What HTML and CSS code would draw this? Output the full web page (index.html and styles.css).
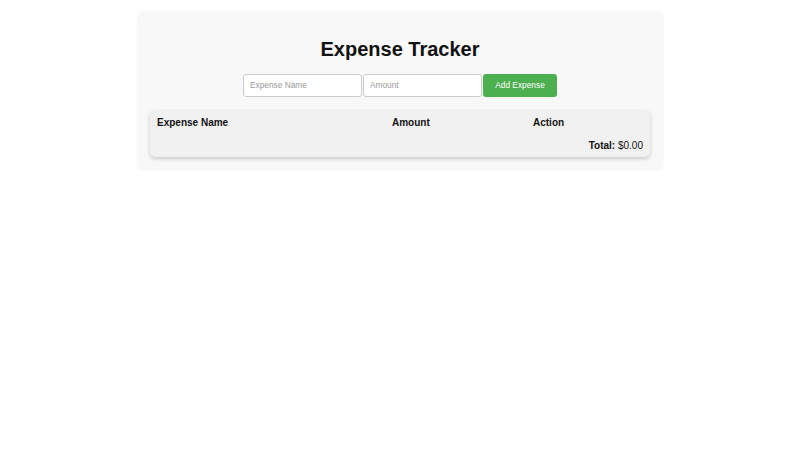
FILE: index.html
```html
<!DOCTYPE html>
<html lang="en">
<head>
    <meta charset="UTF-8">
    <meta name="viewport" content="width=device-width, initial-scale=1.0">
    <title>Expense Tracker</title>
    <link rel="stylesheet" href="styles.css">
</head>
<body>
<div class="container">
    <h1>Expense Tracker</h1>

    <div class="expense-form">
        <input type="text" id="expenseName" placeholder="Expense Name">
        <input type="number" id="expenseAmount" placeholder="Amount">
        <button class="add-button" onclick="addExpense()">Add Expense</button>
    </div>

    <table class="expense-table">
        <thead>
            <tr>
                <th class="col-name">Expense Name</th>
                <th class="col-amount">Amount</th>
                <th class="col-action">Action</th>
            </tr>
        </thead>
        <tbody id="expenseList"></tbody>
        <tfoot>
            <tr>
                <td colspan="3" class="total"><b>Total:</b> $<span id="total">0.00</span></td>
            </tr>
        </tfoot>
    </table>
</div>

<script>
    let expenses = [];

    function addExpense() {
        const name = document.getElementById('expenseName').value.trim();
        const amount = parseFloat(document.getElementById('expenseAmount').value);
        if (!name || isNaN(amount)) return;
        expenses.push({ name: name, amount: amount });
        document.getElementById('expenseName').value = '';
        document.getElementById('expenseAmount').value = '';
        render();
    }

    function removeExpense(i) {
        expenses.splice(i, 1);
        render();
    }

    function render() {
        const list = document.getElementById('expenseList');
        list.innerHTML = '';
        let total = 0;
        expenses.forEach((e, i) => {
            total += e.amount;
            list.innerHTML += `<tr><td>${e.name}</td><td>$${e.amount.toFixed(2)}</td>
                <td><button class="delete-button" onclick="removeExpense(${i})">Delete</button></td></tr>`;
        });
        document.getElementById('total').textContent = total.toFixed(2);
    }
</script>
</body>
</html>
```

FILE: styles.css
```css
body {
    font-family: "Liberation Sans", Arial, sans-serif;
    background-color: #ffffff;
    color: #111;
    margin: 0;
    padding: 0;
}
.container {
    width: 500px;
    margin: 12px auto;
    padding: 12.5px 12.5px 13.5px;
    background-color: #f8f8f8;
    border-radius: 6px;
    box-shadow: 0 0 3px rgba(0,0,0,0.06);
}
h1 {
    text-align: center;
    font-size: 20px;
    margin: 13px 0;
}
.expense-form {
    display: flex;
    justify-content: center;
    gap: 1px;
    margin-bottom: 13.5px;
}
.expense-form input {
    width: 119px;
    box-sizing: border-box;
    padding: 5.75px 6.25px;
    font-family: "Liberation Sans", Arial, sans-serif;
    font-size: 8.33px;
    border: 1px solid #ccc;
    border-radius: 3px;
    background: white;
    -moz-appearance: textfield;
}
.expense-form input::-webkit-outer-spin-button,
.expense-form input::-webkit-inner-spin-button {
    -webkit-appearance: none;
    margin: 0;
}
.expense-form input::placeholder {
    color: #9a9a9a;
}
.add-button {
    background-color: #4caf50;
    color: white;
    border: none;
    padding: 5.75px 12.5px;
    font-family: "Liberation Sans", Arial, sans-serif;
    font-size: 8.33px;
    border-radius: 3px;
    cursor: pointer;
}
.add-button:hover {
    background-color: #45a049;
}
.expense-table {
    width: 100%;
    border-collapse: separate;
    border-spacing: 0;
    background-color: #f1f1f1;
    border-radius: 5px;
    box-shadow: 0 1.5px 4px rgba(0,0,0,0.18);
    font-size: 10px;
}
.expense-table th,
.expense-table td {
    padding: 6px 7px;
    text-align: left;
}
.col-name { width: 47%; }
.col-amount { width: 28.2%; }
.col-action { width: 24.8%; }
.expense-table td.total {
    text-align: right;
}
.delete-button {
    background-color: #f44336;
    color: white;
    border: none;
    padding: 3px 6px;
    border-radius: 3px;
    font-size: 8px;
    cursor: pointer;
}
```
